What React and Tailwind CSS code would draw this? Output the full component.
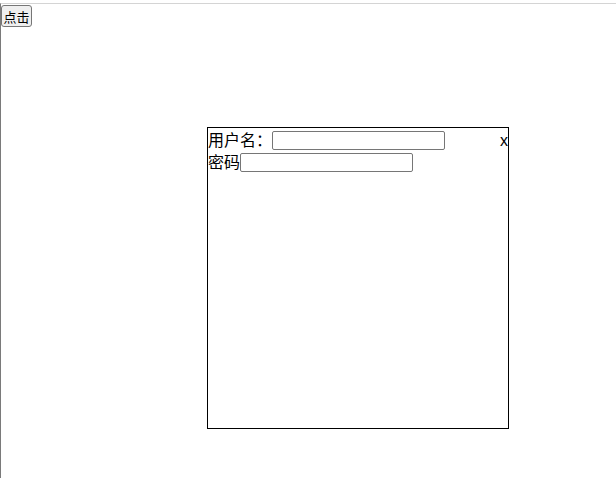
import React from "react";

const App = () => {
  return (
    <div className="relative h-[478px] w-[616px] overflow-hidden bg-white pt-[3px] font-['Noto_Sans_CJK_SC',sans-serif] text-black">
      <div className="h-[475px] border-t border-l border-t-[#d4d4d4] border-l-[#7a7a7a]">
        <button className="mt-[1px] flex h-[22px] w-[31px] items-center justify-center rounded-[3px] border border-[#767676] bg-[#efefef] text-[13px] leading-none">
          点击
        </button>
      </div>

      {/* popup */}
      <div className="absolute left-[207px] top-[127px] h-[302px] w-[302px] border border-black bg-white text-[16px]">
        <div className="flex h-[22px] items-start">
          <span className="leading-[22px]">用户名：</span>
          <input
            type="text"
            className="mt-[3px] h-[19px] w-[173px] rounded-[2px] border border-[#767676] bg-white"
          />
          <span className="ml-auto mt-[2px] leading-[22px] font-['Liberation_Sans',sans-serif]">x</span>
        </div>
        <div className="flex h-[22px] items-start">
          <span className="leading-[22px]">密码</span>
          <input
            type="password"
            className="mt-[3px] h-[19px] w-[173px] rounded-[2px] border border-[#767676] bg-white"
          />
        </div>
      </div>
    </div>
  );
};

export default App;
